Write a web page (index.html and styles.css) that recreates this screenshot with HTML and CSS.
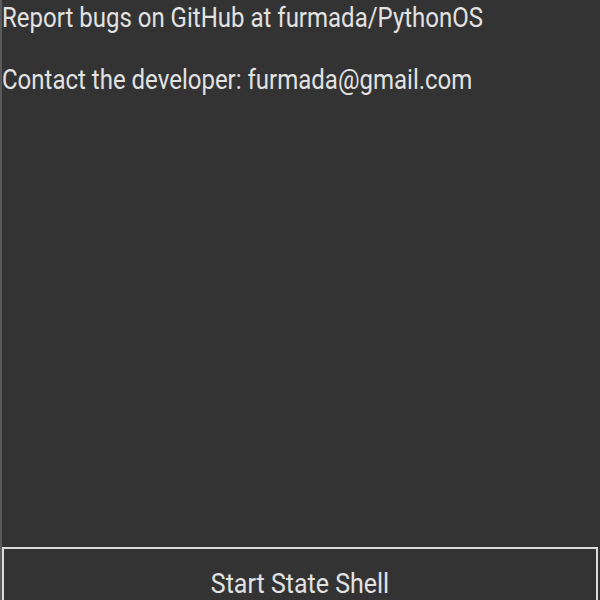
FILE: index.html
```html
<!DOCTYPE html>
<html>
<head>
<meta charset="utf-8">
<link rel="stylesheet" href="styles.css">
</head>
<body>
<div class="screen">
  <div class="info">
    <p class="line">Report bugs on GitHub at furmada/PythonOS</p>
    <p class="line">Contact the developer: furmada@gmail.com</p>
  </div>
  <div class="button"><span class="label">Start State Shell</span></div>
</div>
</body>
</html>
```
FILE: styles.css
```css
html, body {
  margin: 0;
  padding: 0;
  background: #333333;
}
.screen {
  width: 600px;
  height: 600px;
  overflow: hidden;
  display: flex;
  flex-direction: column;
  background: #333333;
  border-left: 2px solid #5a5a5a;
  box-sizing: border-box;
  font-family: Roboto, "Liberation Sans", sans-serif;
  color: #e2e2e2;
}
.info {
  flex: 1;
  display: flex;
  flex-direction: column;
  gap: 32px;
  padding-top: 4px;
}
.line {
  margin: 0;
  font-size: 24px;
  line-height: 30px;
  padding-left: 0;
  transform: scaleY(1.17);
  transform-origin: 0 23.2px;
}
.button {
  flex: 0 0 auto;
  height: 60px;
  margin: 0 2px -7px 0;
  border: 2px solid #dcdcdc;
  border-bottom: none;
  box-sizing: border-box;
  text-align: center;
  font-size: 25px;
  line-height: 71px;
}
.label {
  display: inline-block;
  transform: scaleY(1.12);
  transform-origin: 50% 44px;
}
```
